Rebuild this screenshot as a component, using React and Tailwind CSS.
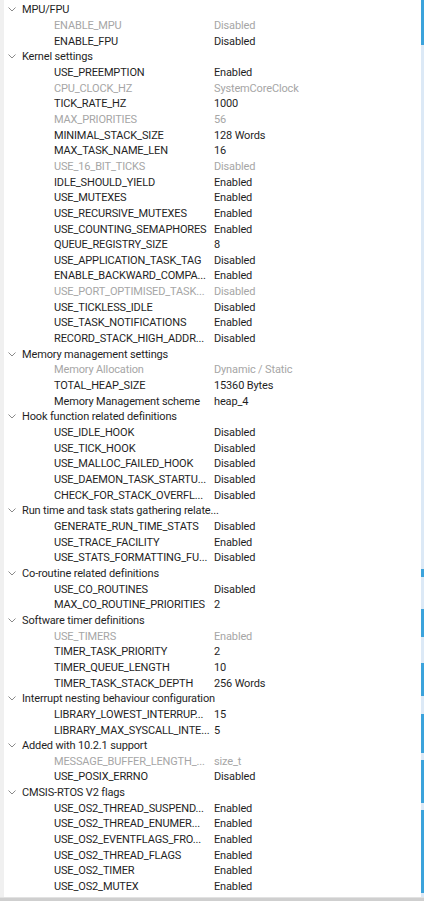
import React from "react";

const GROUPS = [
  {
    title: "MPU/FPU",
    items: [
      ["ENABLE_MPU", "Disabled", true],
      ["ENABLE_FPU", "Disabled"],
    ],
  },
  {
    title: "Kernel settings",
    items: [
      ["USE_PREEMPTION", "Enabled"],
      ["CPU_CLOCK_HZ", "SystemCoreClock", true],
      ["TICK_RATE_HZ", "1000"],
      ["MAX_PRIORITIES", "56", true],
      ["MINIMAL_STACK_SIZE", "128 Words"],
      ["MAX_TASK_NAME_LEN", "16"],
      ["USE_16_BIT_TICKS", "Disabled", true],
      ["IDLE_SHOULD_YIELD", "Enabled"],
      ["USE_MUTEXES", "Enabled"],
      ["USE_RECURSIVE_MUTEXES", "Enabled"],
      ["USE_COUNTING_SEMAPHORES", "Enabled"],
      ["QUEUE_REGISTRY_SIZE", "8"],
      ["USE_APPLICATION_TASK_TAG", "Disabled"],
      ["ENABLE_BACKWARD_COMPA...", "Enabled"],
      ["USE_PORT_OPTIMISED_TASK...", "Disabled", true],
      ["USE_TICKLESS_IDLE", "Disabled"],
      ["USE_TASK_NOTIFICATIONS", "Enabled"],
      ["RECORD_STACK_HIGH_ADDR...", "Disabled"],
    ],
  },
  {
    title: "Memory management settings",
    items: [
      ["Memory Allocation", "Dynamic / Static", true],
      ["TOTAL_HEAP_SIZE", "15360 Bytes"],
      ["Memory Management scheme", "heap_4"],
    ],
  },
  {
    title: "Hook function related definitions",
    items: [
      ["USE_IDLE_HOOK", "Disabled"],
      ["USE_TICK_HOOK", "Disabled"],
      ["USE_MALLOC_FAILED_HOOK", "Disabled"],
      ["USE_DAEMON_TASK_STARTU...", "Disabled"],
      ["CHECK_FOR_STACK_OVERFL...", "Disabled"],
    ],
  },
  {
    title: "Run time and task stats gathering relate...",
    items: [
      ["GENERATE_RUN_TIME_STATS", "Disabled"],
      ["USE_TRACE_FACILITY", "Enabled"],
      ["USE_STATS_FORMATTING_FU...", "Disabled"],
    ],
  },
  {
    title: "Co-routine related definitions",
    items: [
      ["USE_CO_ROUTINES", "Disabled"],
      ["MAX_CO_ROUTINE_PRIORITIES", "2"],
    ],
  },
  {
    title: "Software timer definitions",
    items: [
      ["USE_TIMERS", "Enabled", true],
      ["TIMER_TASK_PRIORITY", "2"],
      ["TIMER_QUEUE_LENGTH", "10"],
      ["TIMER_TASK_STACK_DEPTH", "256 Words"],
    ],
  },
  {
    title: "Interrupt nesting behaviour configuration",
    items: [
      ["LIBRARY_LOWEST_INTERRUP...", "15"],
      ["LIBRARY_MAX_SYSCALL_INTE...", "5"],
    ],
  },
  {
    title: "Added with 10.2.1 support",
    items: [
      ["MESSAGE_BUFFER_LENGTH_...", "size_t", true],
      ["USE_POSIX_ERRNO", "Disabled"],
    ],
  },
  {
    title: "CMSIS-RTOS V2 flags",
    items: [
      ["USE_OS2_THREAD_SUSPEND...", "Enabled"],
      ["USE_OS2_THREAD_ENUMER...", "Enabled"],
      ["USE_OS2_EVENTFLAGS_FRO...", "Enabled"],
      ["USE_OS2_THREAD_FLAGS", "Enabled"],
      ["USE_OS2_TIMER", "Enabled"],
      ["USE_OS2_MUTEX", "Enabled"],
    ],
  },
];

// overview markers on the right-hand scroll track: [top, height]
const MARKERS = [
  [0, 45],
  [569, 8],
  [609, 28],
  [663, 33],
  [714, 39],
  [760, 43],
  [810, 83],
];

const Chevron = () => (
  <svg width="8" height="5" viewBox="0 0 8 5" className="shrink-0">
    <polyline points="0.5,0.5 4,4 7.5,0.5" fill="none" stroke="#8a8a8a" strokeWidth="1" />
  </svg>
);

const Row = ({ name, value, disabled }) => (
  <div
    className={
      "flex items-center h-[15.66px] whitespace-nowrap " +
      (disabled ? "text-[#a6a6a6]" : "text-[#1f1f1f]")
    }
  >
    <div className="w-[214px] pl-[54px] shrink-0">{name}</div>
    <div>{value}</div>
  </div>
);

const Group = ({ group }) => (
  <div className="flex flex-col">
    <div className="flex items-center h-[15.66px] pl-[8px] gap-[6px] text-[#1f1f1f] whitespace-nowrap">
      <Chevron />
      <span>{group.title}</span>
    </div>
    {group.items.map(([n, v, d]) => (
      <Row key={n} name={n} value={v} disabled={d} />
    ))}
  </div>
);

export default function App() {
  return (
    <div
      className="w-[424px] h-[901px] bg-white flex flex-col overflow-hidden text-[11px] leading-none tracking-[-0.15px]"
      style={{ fontFamily: "Roboto, 'Liberation Sans', sans-serif" }}
    >
      <div className="flex flex-1 min-h-0">
        <div className="w-[4px] bg-[#f0f0f0] shrink-0" />
        <div className="flex-1 flex flex-col pt-[2px] ml-[-4px]">
          {GROUPS.map((g) => (
            <Group key={g.title} group={g} />
          ))}
        </div>
        <div className="w-[3px] bg-[#dce9f6] relative shrink-0">
          {MARKERS.map(([t, h]) => (
            <div
              key={t}
              className="absolute left-0 right-0 bg-[#3ba3dc]"
              style={{ top: t, height: h }}
            />
          ))}
        </div>
      </div>
      <div className="h-[4px] bg-[#cfcfcf] border-t border-[#e2e2e2] shrink-0" />
    </div>
  );
}
